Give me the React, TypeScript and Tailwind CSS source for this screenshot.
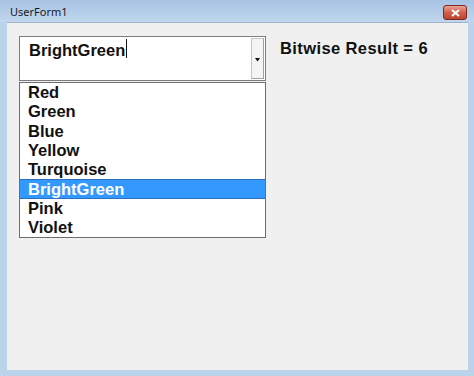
import React from "react";

const items = ["Red", "Green", "Blue", "Yellow", "Turquoise", "BrightGreen", "Pink", "Violet"];

export default function App() {
  return (
    <div className="w-[474px] h-[376px] flex flex-col bg-[#bcd3ec] overflow-hidden" style={{ fontFamily: '"Liberation Sans", Arial, sans-serif' }}>
      <div className="h-[22px] flex items-center justify-between bg-gradient-to-b from-[#a7c3e3] to-[#c1d6ee] pl-[10px] pr-[7px]">
        <span className="text-[11px] text-[#1a1a1a] mt-[2px]" style={{ fontFamily: '"Noto Sans", "Liberation Sans", sans-serif' }}>UserForm1</span>
        <div className="w-[24px] h-[15px] mt-[3px] rounded-[3px] border border-[#7a2a20] bg-gradient-to-b from-[#e8a193] via-[#d0604a] to-[#c0432d] flex items-center justify-center">
          <svg width="9" height="8" viewBox="0 0 9 8">
            <path d="M1 1 L8 7 M8 1 L1 7" stroke="#ffffff" strokeWidth="2" />
          </svg>
        </div>
      </div>
      <div className="flex-1 mx-[7px] mb-[6px] mr-[6px] bg-[#f0f0f0] border-t border-[#a0b4cc] pl-[12px] pt-[13px] flex items-start gap-[14px]">
        <div className="flex flex-col w-[247px]">
          <div className="h-[45px] border border-[#7d7d7d] bg-white flex">
            <div className="flex-1 pl-[9px] pt-[1px] text-[16.5px] font-bold text-[#111] flex items-start">
              <span>BrightGreen</span>
              <span className="w-[1px] h-[19px] bg-[#111] mt-[1px] ml-[1px]"></span>
            </div>
            <div className="w-[13px] my-[1px] mr-[1px] border border-[#c6c6c6] border-r-[#a0a0a0] border-b-[#a0a0a0] bg-[#f4f4f4] flex items-center justify-center">
              <svg width="5" height="4" viewBox="0 0 5 4" className="mt-[2px]">
                <path d="M0 0 H5 L2.5 3.5 Z" fill="#111" />
              </svg>
            </div>
          </div>
          <div className="mt-[1px] border border-[#6e6e6e] bg-white py-[0px]">
            {items.map((it) => (
              <div
                key={it}
                className={
                  "h-[19.25px] leading-[19.25px] pl-[8px] text-[16.5px] font-bold " +
                  (it === "BrightGreen" ? "bg-[#3399ff] text-white border-y border-[#2a6fc0] leading-[17px]" : "text-[#111]")
                }
              >
                {it}
              </div>
            ))}
          </div>
        </div>
        <div className="text-[16.5px] font-bold text-[#111] tracking-[0.4px]">Bitwise Result = 6</div>
      </div>
    </div>
  );
}
